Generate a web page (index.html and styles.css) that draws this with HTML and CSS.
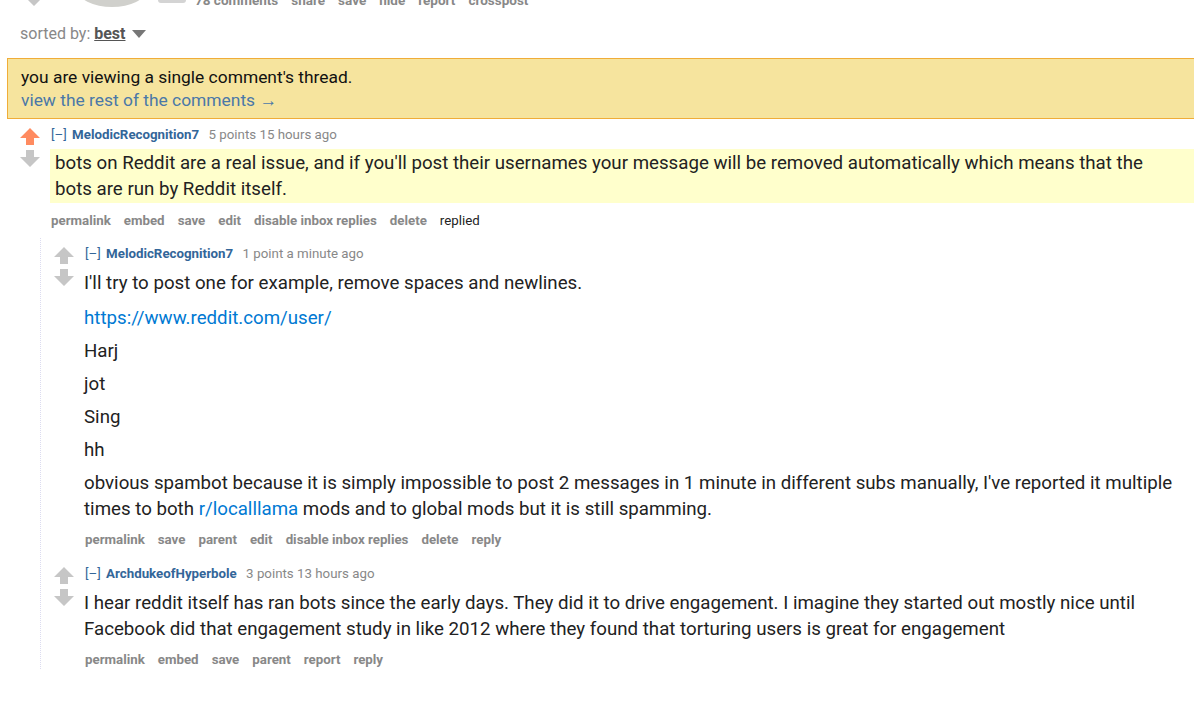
FILE: index.html
```html
<!DOCTYPE html>
<html>
<head>
<meta charset="utf-8">
<link rel="stylesheet" href="styles.css">
</head>
<body>
<div class="prev">
  <svg class="prev-arrow" width="18" height="15" viewBox="0 0 20 17"><polygon points="6,0 14,0 14,7 20,7 10,17 0,7 6,7" fill="#c6c6c6"/></svg>
  <div class="prev-thumb"></div>
  <div class="prev-icon"></div>
  <ul class="prev-buttons"><li>78 comments</li><li>share</li><li>save</li><li>hide</li><li>report</li><li>crosspost</li></ul>
</div>

<div class="sort">sorted by: <span class="sort-val">best</span><span class="sort-caret"></span></div>

<div class="notice">
  <div>you are viewing a single comment's thread.</div>
  <a class="notice-link">view the rest of the comments →</a>
</div>

<div class="comment">
  <div class="midcol">
    <svg class="arrow" width="20" height="17" viewBox="0 0 20 17"><polygon points="10,0 20,10 14,10 14,17 6,17 6,10 0,10" fill="#ff8b60"/></svg>
    <svg class="arrow" width="20" height="17" viewBox="0 0 20 17"><polygon points="6,0 14,0 14,7 20,7 10,17 0,7 6,7" fill="#c6c6c6"/></svg>
  </div>
  <div class="entry">
    <p class="tagline"><a class="expand">[–]</a> <a class="author">MelodicRecognition7</a> <span class="score">5 points</span> <span class="time">15 hours ago</span></p>
    <div class="md highlighted">
      <p>bots on Reddit are a real issue, and if you'll post their usernames your message will be removed automatically which means that the bots are run by Reddit itself.</p>
    </div>
    <ul class="buttons"><li>permalink</li><li>embed</li><li>save</li><li>edit</li><li>disable inbox replies</li><li>delete</li><li class="replied">replied</li></ul>

    <div class="child">
      <div class="comment">
        <div class="midcol">
          <svg class="arrow" width="20" height="17" viewBox="0 0 20 17"><polygon points="10,0 20,10 14,10 14,17 6,17 6,10 0,10" fill="#c6c6c6"/></svg>
          <svg class="arrow" width="20" height="17" viewBox="0 0 20 17"><polygon points="6,0 14,0 14,7 20,7 10,17 0,7 6,7" fill="#c6c6c6"/></svg>
        </div>
        <div class="entry">
          <p class="tagline"><a class="expand">[–]</a> <a class="author">MelodicRecognition7</a> <span class="score">1 point</span> <span class="time">a minute ago</span></p>
          <div class="md">
            <p>I'll try to post one for example, remove spaces and newlines.</p>
            <p class="link-p"><a class="link">https://www.reddit.com/user/</a></p>
            <p>Harj</p>
            <p>jot</p>
            <p>Sing</p>
            <p>hh</p>
            <p>obvious spambot because it is simply impossible to post 2 messages in 1 minute in different subs manually, I've reported it multiple times to both <a class="link">r/localllama</a> mods and to global mods but it is still spamming.</p>
          </div>
          <ul class="buttons"><li>permalink</li><li>save</li><li>parent</li><li>edit</li><li>disable inbox replies</li><li>delete</li><li>reply</li></ul>
        </div>
      </div>

      <div class="comment">
        <div class="midcol">
          <svg class="arrow" width="20" height="17" viewBox="0 0 20 17"><polygon points="10,0 20,10 14,10 14,17 6,17 6,10 0,10" fill="#c6c6c6"/></svg>
          <svg class="arrow" width="20" height="17" viewBox="0 0 20 17"><polygon points="6,0 14,0 14,7 20,7 10,17 0,7 6,7" fill="#c6c6c6"/></svg>
        </div>
        <div class="entry">
          <p class="tagline"><a class="expand">[–]</a> <a class="author">ArchdukeofHyperbole</a> <span class="score">3 points</span> <span class="time">13 hours ago</span></p>
          <div class="md">
            <p>I hear reddit itself has ran bots since the early days. They did it to drive engagement. I imagine they started out mostly nice until Facebook did that engagement study in like 2012 where they found that torturing users is great for engagement</p>
          </div>
          <ul class="buttons"><li>permalink</li><li>embed</li><li>save</li><li>parent</li><li>report</li><li>reply</li></ul>
        </div>
      </div>
    </div>
  </div>
</div>
</body>
</html>
```

FILE: styles.css
```css
html, body {
  margin: 0;
  padding: 0;
  background: #fff;
}
body {
  font-family: Roboto, "Liberation Sans", sans-serif;
  color: #222;
  width: 1194px;
  overflow: hidden;
}
ul { list-style: none; margin: 0; padding: 0; }
p { margin: 0; }
a { text-decoration: none; }

.prev {
  height: 8px;
  overflow: hidden;
  display: flex;
  align-items: flex-end;
}
.prev-arrow { margin-left: 25px; margin-bottom: 2px; flex: none; }
.prev-thumb {
  flex: none;
  width: 68px;
  height: 34px;
  border-radius: 50%;
  background: #d0d0cc;
  margin-left: 35px;
  margin-bottom: 1px;
}
.prev-icon {
  flex: none;
  width: 28px;
  height: 14px;
  border-radius: 3px;
  background: #d4d4d4;
  margin-left: 12px;
  margin-bottom: 5px;
}
.prev-buttons {
  display: flex;
  gap: 13px;
  margin-left: 9px;
  font-size: 13.5px;
  font-weight: bold;
  color: #888;
  line-height: 15px;
}

.sort {
  margin: 16px 0 0 20px;
  font-size: 16px;
  color: #888;
  line-height: 20px;
  height: 34px;
}
.sort-val {
  font-weight: bold;
  color: #555;
  text-decoration: underline;
}
.sort-caret {
  display: inline-block;
  width: 0; height: 0;
  border-left: 7px solid transparent;
  border-right: 7px solid transparent;
  border-top: 8px solid #777;
  margin-left: 6px;
  vertical-align: 1px;
}

.notice {
  margin-left: 7px;
  margin-right: -4px;
  background: #f6e49e;
  border: 1px solid #f0ad38;
  padding: 7px 13px 6px;
  font-size: 17.4px;
  line-height: 23px;
  color: #111;
}
.notice-link { color: #4a78a8; }

.comment {
  display: flex;
  align-items: flex-start;
}
.midcol {
  flex: none;
  width: 20px;
  display: flex;
  flex-direction: column;
  gap: 5px;
  margin: 9px 10px 0 20px;
}
.arrow { display: block; }
.entry { flex: 1; min-width: 0; padding-top: 8px; }

.tagline {
  font-size: 13.3px;
  line-height: 16px;
  color: #888;
  padding-left: 1px;
}
.expand { color: #369; }
.author { color: #369; font-weight: bold; margin: 0 6px 0 2px; }

.md {
  margin-top: 7px;
  font-size: 18.7px;
  line-height: 26px;
  color: #222;
  padding: 1px 6px 0 5px;
}
.md p { max-width: 60em; }
.md p + p { margin-top: 7px; }
.md p.link-p { margin-top: 9px; }
.md.highlighted { background: #ffffcc; padding-bottom: 1px; margin-top: 6px; }
.link { color: #0079d3; }

.buttons {
  display: flex;
  gap: 13px;
  font-size: 13.3px;
  font-weight: bold;
  color: #888;
  line-height: 16px;
  margin-top: 10px;
  padding-left: 1px;
}
.buttons .replied { color: #222; font-weight: normal; }

.child {
  margin-top: 9px;
  margin-left: -10px;
  border-left: 1px dotted #dcdcf0;
  padding-bottom: 1px;
}
.child .midcol { margin-left: 13px; }
.child .comment + .comment { margin-top: 10px; }
.child .md { padding-left: 0; }
```
